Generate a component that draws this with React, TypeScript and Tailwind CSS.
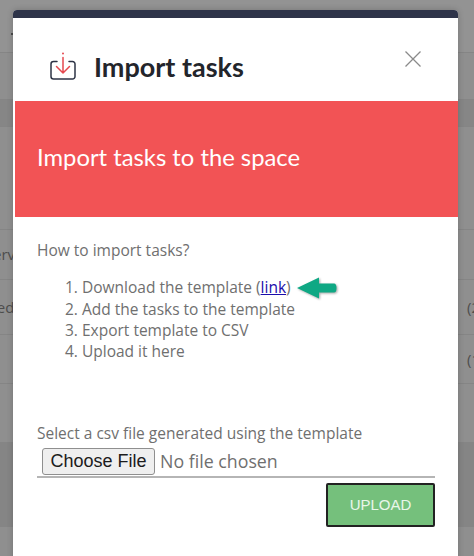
import React from "react";

function ImportIcon() {
  return (
    <svg width="28" height="30" viewBox="0 0 28 30" fill="none">
      <path d="M8 10.500H4.500A2.500 2.500 0 0 0 2 13v12.500A2.500 2.500 0 0 0 4.500 28h19a2.500 2.500 0 0 0 2.500-2.500V13a2.500 2.500 0 0 0-2.500-2.500H20" stroke="#2d3345" strokeWidth="1.500" strokeLinecap="round" />
      <path d="M14 6.500V22M7.500 15.500L14 22l6.500-6.500" stroke="#e5484f" strokeWidth="1.500" strokeLinecap="round" strokeLinejoin="round" />
      <circle cx="14" cy="2.500" r="1" fill="#e5484f" />
    </svg>
  );
}

function Arrow() {
  return (
    <svg width="42" height="26" viewBox="0 0 42 26" className="ml-[5px] shrink-0 drop-shadow-[1px_1px_1px_rgba(0,0,0,0.35)]">
      <path d="M1 13L23 2.500V8.500H38Q40.500 8.500 40.500 13Q40.500 17.500 38 17.500H23V23.500Z" fill="#0fa884" />
    </svg>
  );
}

const sans = "font-['Open_Sans','Noto_Sans',sans-serif]";

function BackgroundRow({ h, left, right, tone }: { h: string; left?: string; right?: string; tone: string }) {
  return (
    <div className={`${h} ${tone} flex items-center justify-between border-b border-[#858585] text-[15px] text-[#4d4d4d] ${sans}`}>
      <span className="ml-[-7px]">{left}</span>
      <span className="mr-[-6px]">{right}</span>
    </div>
  );
}

export default function App() {
  return (
    <div className="w-[474px] h-[556px] overflow-hidden bg-[#8f8f8f] relative font-['Liberation_Sans',sans-serif]">
      <div className="flex flex-col">
        <BackgroundRow h="h-[53px]" tone="bg-[#939393]" />
        <BackgroundRow h="h-[47px]" tone="bg-[#8f8f8f]" />
        <BackgroundRow h="h-[27px]" tone="bg-[#868686]" />
        <BackgroundRow h="h-[103px]" tone="bg-[#8f8f8f]" />
        <BackgroundRow h="h-[50px]" left="erv" tone="bg-[#8f8f8f]" />
        <BackgroundRow h="h-[55px]" left="led" right="(2" tone="bg-[#8f8f8f]" />
        <BackgroundRow h="h-[49px]" right="(1" tone="bg-[#8f8f8f]" />
        <BackgroundRow h="h-[59px]" tone="bg-[#8f8f8f]" />
        <BackgroundRow h="h-[84px]" tone="bg-[#858585]" />
      </div>
      <div className="absolute left-[11px] top-[33px] w-[2px] h-[2px] rounded-full bg-[#333]" />
      <div className="absolute left-[13px] right-[16px] top-[10px] h-[560px] rounded-t-[4px] bg-white overflow-hidden shadow-[0_0_6px_rgba(0,0,0,0.2)]">
        <div className="h-[8px] bg-[#2e3449]" />
        <div className="h-[83px] flex items-start pl-[36px] pr-[36px] pt-[33px]">
          <ImportIcon />
          <h1 className="ml-[17px] mt-[-1px] text-[27px] leading-[34px] font-bold text-[#23252b] font-['Lato',sans-serif]">Import tasks</h1>
          <button className="ml-auto mt-[-1px] text-[#8a8a8a]">
            <svg width="18" height="18" viewBox="0 0 18 18" fill="none" stroke="currentColor" strokeWidth="1.300">
              <path d="M1.500 1.500L16.500 16.500M16.500 1.500L1.500 16.500" />
            </svg>
          </button>
        </div>
        <div className="ml-[2px] h-[116px] bg-[#f25355] flex items-center pl-[22px] pb-[3px]">
          <h2 className="text-[23.800px] text-white font-['Lato',sans-serif] font-normal">Import tasks to the space</h2>
        </div>
        <div className={`px-[24px] pt-[23px] text-[15.500px] leading-[21.300px] text-[#6f6f6f] ${sans}`}>
          <p>How to import tasks?</p>
          <ol className="mt-[16px] ml-[28px] flex flex-col">
            <li className="flex items-center h-[21.300px]">
              <span>1. Download the template (<a className="text-[#1a0dab] underline">link</a>)</span>
              <Arrow />
            </li>
            <li className="h-[21.300px]">2. Add the tasks to the template</li>
            <li className="h-[21.300px]">3. Export template to CSV</li>
            <li className="h-[21.300px]">4. Upload it here</li>
          </ol>
          <p className="mt-[61px]">Select a csv file generated using the template</p>
          <div className="flex items-center h-[33px] pt-[3px] border-b-2 border-[#b5b5b5] mr-[-1px]">
            <span className="ml-[5px] w-[113px] h-[27px] shrink-0 flex items-center justify-center bg-[#efefef] border border-[#8f8f8f] rounded-[3px] text-[18px] text-[#1c1c1c] font-['Liberation_Sans',sans-serif]">Choose File</span>
            <span className="ml-[5px] text-[17.800px] text-[#6f6f6f]">No file chosen</span>
          </div>
          <div className="flex justify-end mr-[-1px] mt-[5px]">
            <button className="w-[109px] h-[44px] rounded-[2px] border-2 border-[#222] bg-[#75c07c] text-[15px] text-[#e9f6ea] font-['Liberation_Sans',sans-serif]">UPLOAD</button>
          </div>
        </div>
      </div>
    </div>
  );
}
